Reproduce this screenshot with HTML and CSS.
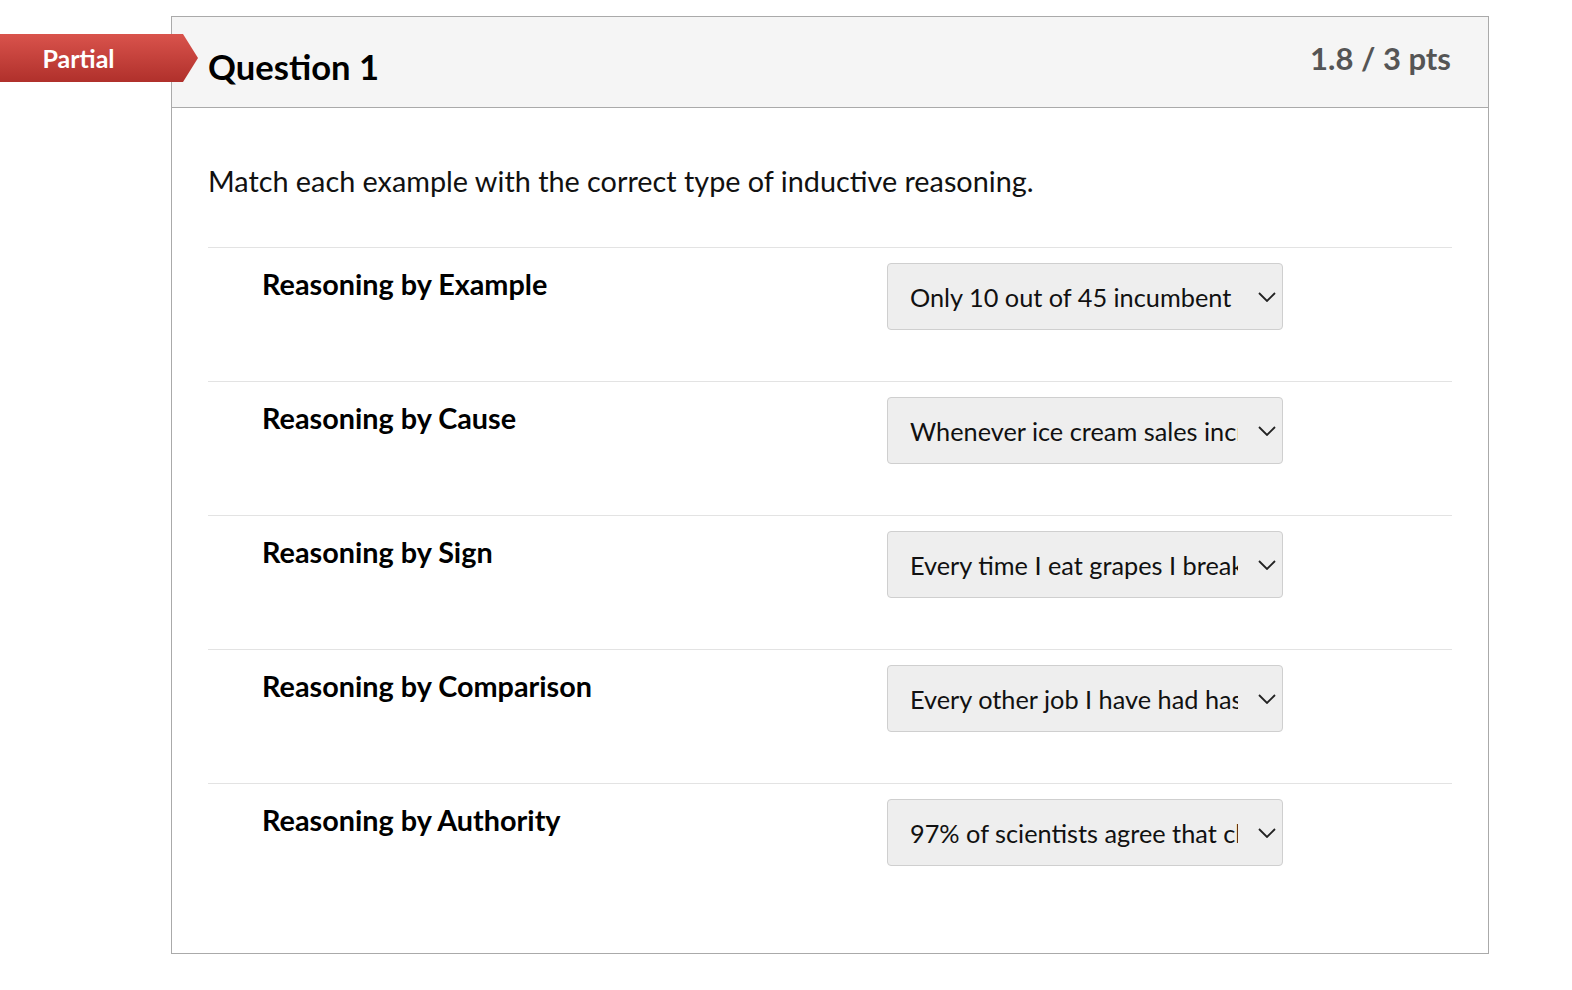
FILE: index.html
```html
<!DOCTYPE html>
<html>
<head>
<meta charset="utf-8">
<link rel="stylesheet" href="styles.css">
</head>
<body>
<div class="badge"><span>Partial</span></div>
<div class="card">
  <div class="card-header">
    <h2 class="title">Question 1</h2>
    <div class="pts">1.8 / 3 pts</div>
  </div>
  <div class="card-body">
    <p class="prompt">Match each example with the correct type of inductive reasoning.</p>
    <div class="rows">
      <div class="row">
        <div class="label">Reasoning by Example</div>
        <div class="select"><span class="val">Only 10 out of 45 incumbent</span><svg class="chev" viewBox="0 0 18 10" width="18" height="10"><path d="M1 1 L9 9 L17 1" fill="none" stroke="#222" stroke-width="1.8"/></svg></div>
      </div>
      <div class="row">
        <div class="label">Reasoning by Cause</div>
        <div class="select"><span class="val">Whenever ice cream sales increase, crime rises</span><svg class="chev" viewBox="0 0 18 10" width="18" height="10"><path d="M1 1 L9 9 L17 1" fill="none" stroke="#222" stroke-width="1.8"/></svg></div>
      </div>
      <div class="row">
        <div class="label">Reasoning by Sign</div>
        <div class="select"><span class="val">Every time I eat grapes I break out</span><svg class="chev" viewBox="0 0 18 10" width="18" height="10"><path d="M1 1 L9 9 L17 1" fill="none" stroke="#222" stroke-width="1.8"/></svg></div>
      </div>
      <div class="row">
        <div class="label">Reasoning by Comparison</div>
        <div class="select"><span class="val">Every other job I have had has paid well</span><svg class="chev" viewBox="0 0 18 10" width="18" height="10"><path d="M1 1 L9 9 L17 1" fill="none" stroke="#222" stroke-width="1.8"/></svg></div>
      </div>
      <div class="row">
        <div class="label">Reasoning by Authority</div>
        <div class="select"><span class="val">97% of scientists agree that climate change</span><svg class="chev" viewBox="0 0 18 10" width="18" height="10"><path d="M1 1 L9 9 L17 1" fill="none" stroke="#222" stroke-width="1.8"/></svg></div>
      </div>
    </div>
  </div>
</div>
</body>
</html>
```

FILE: styles.css
```css
* { box-sizing: border-box; }
html, body { margin: 0; padding: 0; background: #fff; }
body {
  font-family: Lato, "Noto Sans", sans-serif;
  color: #111;
  padding-top: 16px;
}
.badge {
  position: absolute;
  left: 0;
  top: 34px;
  width: 198px;
  height: 48px;
  background: linear-gradient(#d9534c, #b0302b);
  clip-path: polygon(0 0, 183px 0, 198px 50%, 183px 100%, 0 100%);
  color: #fff;
  font-weight: 700;
  font-size: 25px;
  display: flex;
  align-items: center;
  z-index: 2;
}
.badge span { width: 157px; text-align: center; }
.card {
  margin-left: 171px;
  width: 1318px;
  border: 1px solid #aaa;
}
.card-header {
  height: 91px;
  background: #f5f5f5;
  border-bottom: 1px solid #aaa;
  display: flex;
  justify-content: space-between;
  align-items: flex-start;
  padding: 0 37px 0 36px;
}
.title {
  margin: 0;
  margin-top: 29px;
  font-size: 34.6px;
  line-height: 42px;
  font-weight: 700;
  color: #000;
}
.pts {
  margin-top: 22px;
  font-size: 31px;
  line-height: 38px;
  font-weight: 700;
  color: #555;
}
.card-body {
  padding: 57px 36px 36px 36px;
}
.prompt {
  margin: 0 0 50px 0;
  font-size: 28.8px;
  line-height: 32px;
  color: #111;
}
.row {
  height: 134px;
  border-top: 1px solid #e3e3e3;
  display: grid;
  grid-template-columns: 679px 396px;
  align-items: start;
}
.label {
  padding: 20px 0 0 54px;
  font-size: 28.8px;
  line-height: 33px;
  font-weight: 700;
  color: #000;
}
.select {
  margin-top: 15px;
  height: 67px;
  background: #eeeeee;
  border: 1px solid #cfcfcf;
  border-radius: 4px;
  display: flex;
  align-items: center;
  padding-left: 22px;
  padding-right: 6px;
}
.val {
  width: 328px;
  overflow: hidden;
  white-space: nowrap;
  font-size: 25.3px;
  line-height: 30px;
  color: #111;
  flex: none;
}
.chev { margin-left: auto; }
```
